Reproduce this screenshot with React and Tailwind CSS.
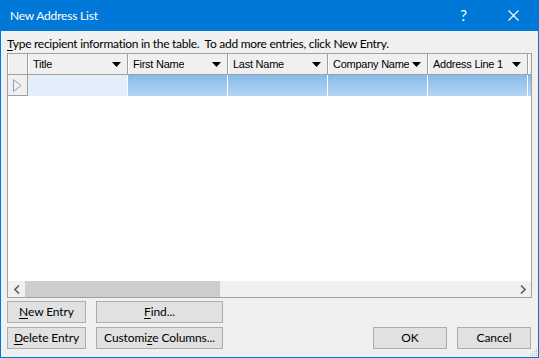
import React from "react";

const columns = ["Title", "First Name", "Last Name", "Company Name", "Address Line 1"];

function Arrow() {
  return (
    <svg width="9" height="5" viewBox="0 0 9 5" className="shrink-0">
      <path d="M0 0 H9 L4.5 5 Z" fill="#000" />
    </svg>
  );
}

function HeaderCell({ label }) {
  return (
    <div className="flex items-center justify-between w-[100px] h-full pl-[4px] pr-[6px] bg-[#f0f0f0] border-l border-l-white border-r border-r-[#a0a0a0]">
      <span className="whitespace-nowrap overflow-hidden tracking-[-0.25px]">{label}</span>
      <Arrow />
    </div>
  );
}

function Button({ children, className }) {
  return (
    <button className={"h-[22px] bg-[#e1e1e1] border border-[#adadad] text-[12px] text-black leading-none whitespace-nowrap tracking-[-0.1px] " + className}>
      {children}
    </button>
  );
}

export default function App() {
  return (
    <div
      className="relative w-[539px] h-[358px] flex flex-col bg-[#f0f0f0] border-x border-b border-[#0078d7] overflow-hidden"
      style={{ fontFamily: 'Lato, "Noto Sans", sans-serif' }}
    >
      {/* title bar */}
      <div className="flex items-center h-[31px] -mx-px bg-[#0078d7] text-white text-[12px] shrink-0">
        <span className="pl-[10px] tracking-[-0.2px]">New Address List</span>
        <span className="ml-auto mr-[41px] text-[15px] leading-none">?</span>
        <svg width="11" height="11" viewBox="0 0 11 11" className="mr-[20px]">
          <path d="M0.5 0.5 L10.5 10.5 M10.5 0.5 L0.5 10.5" stroke="#fff" strokeWidth="1.1" />
        </svg>
      </div>

      <div className="flex flex-col flex-1 px-[6px]">
        <p className="h-[22px] pt-[5px] text-[12px] leading-[16px] text-black whitespace-nowrap tracking-[-0.28px]">
          <u className="underline-offset-2">T</u>ype recipient information in the table.&nbsp; To add more entries, click New Entry.
        </p>

        {/* grid */}
        <div className="flex flex-col w-[525px] h-[245px] border border-[#a0a0a0] bg-white">
          <div
            className="flex h-[21px] border-b border-[#a0a0a0] text-[11px] text-black"
            style={{ fontFamily: '"Liberation Sans", Arial, sans-serif' }}
          >
            <div className="w-[20px] h-full bg-[#f0f0f0] border-l border-l-white border-r border-r-[#a0a0a0]" />
            {columns.map((c) => (
              <HeaderCell key={c} label={c} />
            ))}
            <div className="flex-1 h-full bg-[#f0f0f0] border-l border-l-white" />
          </div>

          <div className="flex h-[21px]">
            <div className="flex items-center justify-center w-[20px] h-full bg-[#f0f0f0] border-r border-b border-[#a0a0a0]">
              <svg width="9" height="13" viewBox="0 0 9 13">
                <path d="M0.5 0.5 L8 6.5 L0.5 12.5 Z" fill="none" stroke="#8aa2c2" strokeWidth="1" />
              </svg>
            </div>
            <div className="w-[100px] h-full bg-[#e3eefa] border-r border-white" />
            {[0, 1, 2, 3].map((i) => (
              <div key={i} className="w-[100px] h-full bg-gradient-to-b from-[#86bbe8] to-[#b4d5f3] border-r border-white" />
            ))}
            <div className="flex-1 h-full bg-gradient-to-b from-[#86bbe8] to-[#b4d5f3]" />
          </div>

          <div className="flex-1" />

          {/* horizontal scrollbar */}
          <div className="flex items-center h-[16px] bg-[#f0f0f0]">
            <div className="flex items-center justify-center w-[17px] h-full">
              <svg width="6" height="9" viewBox="0 0 6 9">
                <path d="M5 0.5 L1 4.5 L5 8.5" fill="none" stroke="#606060" strokeWidth="1.6" />
              </svg>
            </div>
            <div className="w-[195px] h-full bg-[#cdcdcd]" />
            <div className="flex-1" />
            <div className="flex items-center justify-center w-[17px] h-full">
              <svg width="6" height="9" viewBox="0 0 6 9">
                <path d="M1 0.5 L5 4.5 L1 8.5" fill="none" stroke="#606060" strokeWidth="1.6" />
              </svg>
            </div>
          </div>
        </div>

        {/* buttons */}
        <div className="flex gap-[10px] mt-[3px]">
          <Button className="w-[79px]"><u className="underline-offset-2">N</u>ew Entry</Button>
          <Button className="w-[127px]"><u className="underline-offset-2">F</u>ind...</Button>
        </div>
        <div className="flex gap-[10px] mt-[4px]">
          <Button className="w-[79px]"><u className="underline-offset-2">D</u>elete Entry</Button>
          <Button className="w-[127px]">Customi<u className="underline-offset-2">z</u>e Columns...</Button>
          <Button className="w-[74px] ml-auto">OK</Button>
          <Button className="w-[74px] mr-px">Cancel</Button>
        </div>
      </div>

      {/* size grip */}
      <svg width="10" height="10" viewBox="0 0 10 10" className="absolute right-0 bottom-0">
        <g fill="#b8b8b8">
          <rect x="8" y="2" width="1" height="1" />
          <rect x="6" y="4" width="1" height="1" />
          <rect x="8" y="4" width="1" height="1" />
          <rect x="4" y="6" width="1" height="1" />
          <rect x="6" y="6" width="1" height="1" />
          <rect x="8" y="6" width="1" height="1" />
          <rect x="2" y="8" width="1" height="1" />
          <rect x="4" y="8" width="1" height="1" />
          <rect x="6" y="8" width="1" height="1" />
          <rect x="8" y="8" width="1" height="1" />
        </g>
      </svg>
    </div>
  );
}
